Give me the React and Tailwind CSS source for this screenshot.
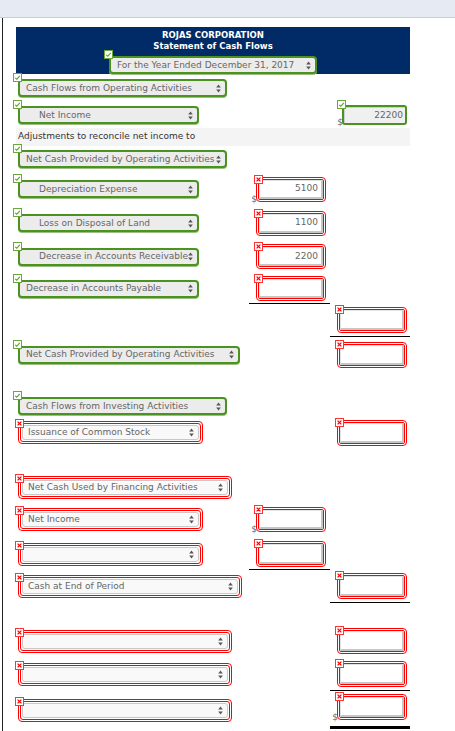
import React from 'react';

const font = "font-['DejaVu_Sans','Verdana',sans-serif]";

function Arrows() {
  return (
    <svg width="5" height="9" viewBox="0 0 5 9" className="ml-auto mr-[4px] shrink-0">
      <path d="M2.5 0.5 L4.8 3.6 L0.2 3.6 Z" fill="#555" />
      <path d="M2.5 8.5 L4.8 5.4 L0.2 5.4 Z" fill="#555" />
    </svg>
  );
}

function Check({ pos }) {
  return (
    <span className={`absolute ${pos} w-[9px] h-[9px] bg-white border border-[#6aa83c] flex items-center justify-center z-10`}>
      <svg width="7" height="7" viewBox="0 0 7 7">
        <path d="M1.2 3.8 L2.8 5.2 L5.8 1.8" stroke="#5f9f34" strokeWidth="1.1" fill="none" />
      </svg>
    </span>
  );
}

function Cross({ pos }) {
  return (
    <span className={`absolute ${pos} w-[9px] h-[9px] bg-white border border-[#f33] flex items-center justify-center z-10`}>
      <svg width="5" height="5" viewBox="0 0 5 5">
        <path d="M0.6 0.6 L4.4 4.4 M4.4 0.6 L0.6 4.4" stroke="#f00" strokeWidth="1.3" />
      </svg>
    </span>
  );
}

function GreenSelect({ w, text, indent = 'pl-[6px]' }) {
  return (
    <div className={`relative ${w} h-[18px] border-2 border-[#4a9320] rounded-[4px] bg-[#ececec] flex items-center shadow-[0_1px_0_#9dbf86]`}>
      <Check pos="-left-[7px] -top-[8px]" />
      <span className={`${indent} text-[#666] whitespace-nowrap leading-none`}>{text}</span>
      <Arrows />
    </div>
  );
}

function RedSelect({ w, text = '' }) {
  return (
    <div className={`relative ${w} h-[23px] border border-[#f00] rounded-[4px] p-[1px] bg-white`}>
      <Cross pos="-left-[4px] -top-[3px]" />
      <div className="h-full border border-[#f00] rounded-[3px] p-[1px]">
        <div className="h-full border border-[#c8c8c8] rounded-[3px] bg-[#f9f9f9] flex items-center">
          <span className="pl-[5px] text-[#666] whitespace-nowrap leading-none">{text}</span>
          <Arrows />
        </div>
      </div>
    </div>
  );
}

function RedBox({ value = '', h = 'h-[25px]' }) {
  return (
    <div className={`relative w-[70px] ${h} border border-[#f00] rounded-[4px] p-[1px] bg-white`}>
      <Cross pos="-left-[3px] -top-[3px]" />
      <div className="h-full border border-[#f00] rounded-[2px]">
        <div className="h-full border-t border-l border-[#e2e2e2] border-r-2 border-b-2 border-r-[#c6c6c6] border-b-[#c6c6c6] bg-white flex items-center justify-end pr-[3px] text-[#666] leading-none">
          {value}
        </div>
      </div>
    </div>
  );
}

function GreenBox({ value }) {
  return (
    <div className="relative w-[65px] h-[20px] border-2 border-[#4a9320] rounded-[3px] bg-[#f0f0f0]">
      <Check pos="-left-[7px] -top-[7px]" />
      <div className="h-full border-t border-l border-[#cfcfcf] flex items-center justify-end pr-[2px] text-[#666] leading-none">
        {value}
      </div>
    </div>
  );
}

function Dollar({ children }) {
  return (
    <div className="flex items-end">
      <span className="text-[9px] leading-none text-[#666] mb-[-2px] mr-[-1px]">$</span>
      {children}
    </div>
  );
}

function Row({ h, left, mid, right, midLine, rightLine, rightThick, bg }) {
  return (
    <div className={`flex ${h} items-center ${bg || ''}`}>
      <div className="w-[233px] pl-[2px] flex items-center">{left}</div>
      <div className={`w-[81px] self-stretch flex items-center justify-end pr-[4px] ${midLine ? 'border-b border-black' : ''}`}>
        {mid}
      </div>
      <div className={`w-[80px] self-stretch flex justify-end pr-[3px] ${rightThick ? 'items-start pt-[3px] border-b-[3px] border-black' : rightLine ? 'items-center border-b border-black' : 'items-center'}`}>
        {right}
      </div>
    </div>
  );
}

export default function App() {
  return (
    <div className={`${font} text-[9px] bg-white min-h-[731px] w-[455px] overflow-hidden`}>
      <div className="h-[18px] bg-[#e6eaf2] border-b border-[#c8ced8]" />
      <div className="ml-[2px] border-l border-[#222] min-h-[713px] pt-[9px] pl-[13px]">
        <div className="w-[394px]">
          {/* Header */}
          <div className="h-[47px] bg-[#002b66] flex flex-col items-center pt-[3px]">
            <div className="text-white font-bold text-[8.5px] leading-[11px]">ROJAS CORPORATION</div>
            <div className="text-white font-bold text-[8.5px] leading-[11px]">Statement of Cash Flows</div>
            <div className="mt-[4px]">
              <GreenSelect w="w-[208px]" text="For the Year Ended December 31, 2017" indent="pl-[6px]" />
            </div>
          </div>

          <Row h="h-[28px]" left={<GreenSelect w="w-[209px]" text="Cash Flows from Operating Activities" />} />
          <Row
            h="h-[26px]"
            left={<GreenSelect w="w-[181px]" text="Net Income" indent="pl-[19px]" />}
            right={<Dollar><GreenBox value="22200" /></Dollar>}
          />
          <div className="h-[18px] bg-[#f4f4f4] flex items-center pl-[2px] text-[#333]">
            Adjustments to reconcile net income to
          </div>
          <Row h="h-[26px]" left={<GreenSelect w="w-[209px]" text="Net Cash Provided by Operating Activities" />} />
          <Row
            h="h-[34px]"
            left={<GreenSelect w="w-[181px]" text="Depreciation Expense" indent="pl-[19px]" />}
            mid={<Dollar><RedBox value="5100" /></Dollar>}
          />
          <Row
            h="h-[34px]"
            left={<GreenSelect w="w-[181px]" text="Loss on Disposal of Land" indent="pl-[19px]" />}
            mid={<RedBox value="1100" />}
          />
          <Row
            h="h-[33px]"
            left={<GreenSelect w="w-[181px]" text="Decrease in Accounts Receivable" indent="pl-[19px]" />}
            mid={<RedBox value="2200" />}
          />
          <Row
            h="h-[31px]"
            left={<GreenSelect w="w-[181px]" text="Decrease in Accounts Payable" />}
            mid={<RedBox />}
            midLine
          />
          <Row h="h-[33px]" right={<RedBox h="h-[26px]" />} rightLine />
          <Row
            h="h-[35px]"
            left={<GreenSelect w="w-[222px]" text="Net Cash Provided by Operating Activities" />}
            right={<RedBox h="h-[26px]" />}
          />
          <div className="h-[22px]" />
          <Row h="h-[24px]" left={<GreenSelect w="w-[209px]" text="Cash Flows from Investing Activities" />} />
          <Row
            h="h-[29px]"
            left={<RedSelect w="w-[185px]" text="Issuance of Common Stock" />}
            right={<RedBox h="h-[26px]" />}
          />
          <div className="h-[27px]" />
          <Row h="h-[26px]" left={<RedSelect w="w-[214px]" text="Net Cash Used by Financing Activities" />} />
          <Row
            h="h-[38px]"
            left={<RedSelect w="w-[185px]" text="Net Income" />}
            mid={<Dollar><RedBox /></Dollar>}
          />
          <Row h="h-[32px]" left={<RedSelect w="w-[185px]" />} mid={<RedBox h="h-[26px]" />} midLine />
          <Row
            h="h-[33px]"
            left={<RedSelect w="w-[224px]" text="Cash at End of Period" />}
            right={<RedBox h="h-[26px]" />}
            rightLine
          />
          <div className="h-[21px]" />
          <Row h="h-[34px]" left={<RedSelect w="w-[214px]" />} right={<RedBox h="h-[26px]" />} />
          <Row h="h-[33px]" left={<RedSelect w="w-[214px]" />} right={<RedBox h="h-[26px]" />} rightLine />
          <Row
            h="h-[38px]"
            left={<RedSelect w="w-[214px]" />}
            right={<Dollar><RedBox h="h-[26px]" /></Dollar>}
            rightThick
          />
        </div>
      </div>
    </div>
  );
}
